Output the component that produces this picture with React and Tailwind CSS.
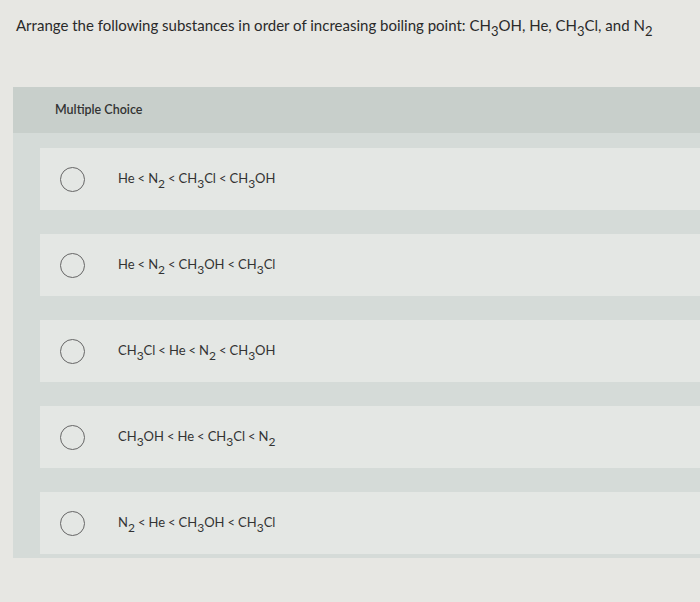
import React from 'react';

const options = [
  [['He'], ['<'], ['N', '2'], ['<'], ['CH', '3', 'Cl'], ['<'], ['CH', '3', 'OH']],
  [['He'], ['<'], ['N', '2'], ['<'], ['CH', '3', 'OH'], ['<'], ['CH', '3', 'Cl']],
  [['CH', '3', 'Cl'], ['<'], ['He'], ['<'], ['N', '2'], ['<'], ['CH', '3', 'OH']],
  [['CH', '3', 'OH'], ['<'], ['He'], ['<'], ['CH', '3', 'Cl'], ['<'], ['N', '2']],
  [['N', '2'], ['<'], ['He'], ['<'], ['CH', '3', 'OH'], ['<'], ['CH', '3', 'Cl']],
];

function Formula({ parts }) {
  return (
    <span>
      {parts[0]}
      {parts[1] && <sub className="text-[12px] align-[-2px]">{parts[1]}</sub>}
      {parts[2]}
    </span>
  );
}

export default function App() {
  return (
    <div className="w-[700px] h-[602px] bg-[#e7e7e3] text-[#2a2a2a] font-['Lato','Open_Sans',sans-serif] overflow-hidden">
      {/* Question */}
      <div className="pl-[16px] pt-[15px] text-[15px] leading-[20px]">
        Arrange the following substances in order of increasing boiling point: CH<sub className="text-[13px] align-[-2px]">3</sub>OH, He, CH<sub className="text-[13px] align-[-2px]">3</sub>Cl, and N<sub className="text-[13px] align-[-2px]">2</sub>
      </div>

      {/* Answer panel */}
      <div className="ml-[13px] mt-[52px] pb-[4px] bg-[#d5dbd8]">
        <div className="h-[46px] bg-[#c8cfcb] flex items-center pl-[42px] text-[12.5px] font-semibold text-[#333]">
          Multiple Choice
        </div>
        <div className="pt-[15px] pl-[27px] flex flex-col gap-[24px]">
          {options.map((opt, i) => (
            <div key={i} className="h-[62px] bg-[#e4e7e4] flex items-center pl-[20px] gap-[33px]">
              <div className="w-[25px] h-[25px] rounded-full border-[1.5px] border-[#666]" />
              <div className="text-[13px] text-[#333] flex gap-[3px] items-center">
                {opt.map((p, j) => (
                  <Formula key={j} parts={p} />
                ))}
              </div>
            </div>
          ))}
        </div>
      </div>
    </div>
  );
}
